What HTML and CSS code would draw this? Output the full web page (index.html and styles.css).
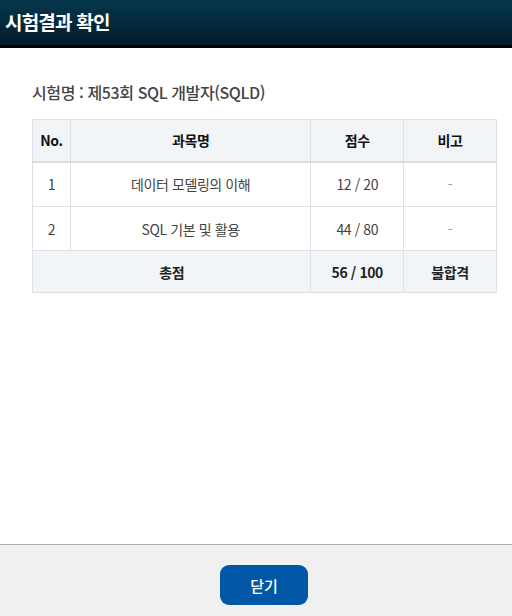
FILE: index.html
```html
<!DOCTYPE html>
<html lang="ko">
<head>
<meta charset="utf-8">
<link rel="stylesheet" href="styles.css">
</head>
<body>
<div class="page">
  <header class="top">
    <h1 class="top-title">시험결과 확인</h1>
  </header>
  <main class="content">
    <h2 class="exam-name">시험명 : 제53회 SQL 개발자(SQLD)</h2>
    <table class="result">
      <colgroup>
        <col class="c-no"><col class="c-subj"><col class="c-score"><col class="c-note">
      </colgroup>
      <thead>
        <tr><th>No.</th><th>과목명</th><th>점수</th><th>비고</th></tr>
      </thead>
      <tbody>
        <tr><td>1</td><td>데이터 모델링의 이해</td><td>12 / 20</td><td class="dash">-</td></tr>
        <tr><td>2</td><td>SQL 기본 및 활용</td><td>44 / 80</td><td class="dash">-</td></tr>
      </tbody>
      <tfoot>
        <tr><th colspan="2">총점</th><th>56 / 100</th><th>불합격</th></tr>
      </tfoot>
    </table>
  </main>
  <footer class="bottom">
    <button class="close-btn" type="button">닫기</button>
  </footer>
</div>
</body>
</html>
```
FILE: styles.css
```css
* { box-sizing: border-box; }
html, body { margin: 0; padding: 0; }
body {
  font-family: "Noto Sans CJK KR", "Noto Sans", sans-serif;
  background: #fff;
  color: #333;
}
.page {
  width: 512px;
  height: 616px;
  display: flex;
  flex-direction: column;
  overflow: hidden;
}
.top {
  height: 48px;
  background: linear-gradient(#06364b, #021e2c);
  border-bottom: 3px solid #000;
  display: flex;
  align-items: center;
  padding: 0 5px 2px;
}
.top-title {
  margin: 0;
  font-size: 19px;
  font-weight: 700;
  color: #fff;
  letter-spacing: -0.8px;
}
.content {
  flex: 1;
  padding: 32px 15px 0 32px;
}
.exam-name {
  margin: 0 0 15px;
  font-size: 16px;
  font-weight: 500;
  color: #444;
  letter-spacing: -0.4px;
  line-height: 24px;
}
.result {
  width: 465px;
  border-collapse: collapse;
  font-size: 14px;
  letter-spacing: -0.4px;
}
.c-no { width: 38px; }
.c-subj { width: 241px; }
.c-score { width: 93px; }
.c-note { width: 93px; }
.result th, .result td {
  border: 1px solid #dde1e5;
  text-align: center;
  padding: 0;
}
.result thead th {
  height: 42px;
  background: #f2f5f7;
  font-weight: 700;
  color: #111;
  border-bottom: 2px solid #d9dde1;
}
.result tbody td {
  height: 45px;
  color: #444;
  font-weight: 400;
}
.result tbody tr + tr td { height: 44px; }
.result td.dash { color: #999; }
.result tfoot th {
  height: 42px;
  background: #f2f5f7;
  font-weight: 700;
  color: #222;
}
.bottom {
  height: 72px;
  background: #f0f0f0;
  border-top: 1px solid #aaa;
  display: flex;
  justify-content: center;
  padding: 20px 0 0 16px;
}
.close-btn {
  width: 88px;
  height: 40px;
  border: none;
  border-radius: 9px;
  background: #0057a5;
  color: #fff;
  font-family: "Noto Sans CJK KR", "Noto Sans", sans-serif;
  font-size: 15px;
  font-weight: 500;
  padding: 0;
}
```
